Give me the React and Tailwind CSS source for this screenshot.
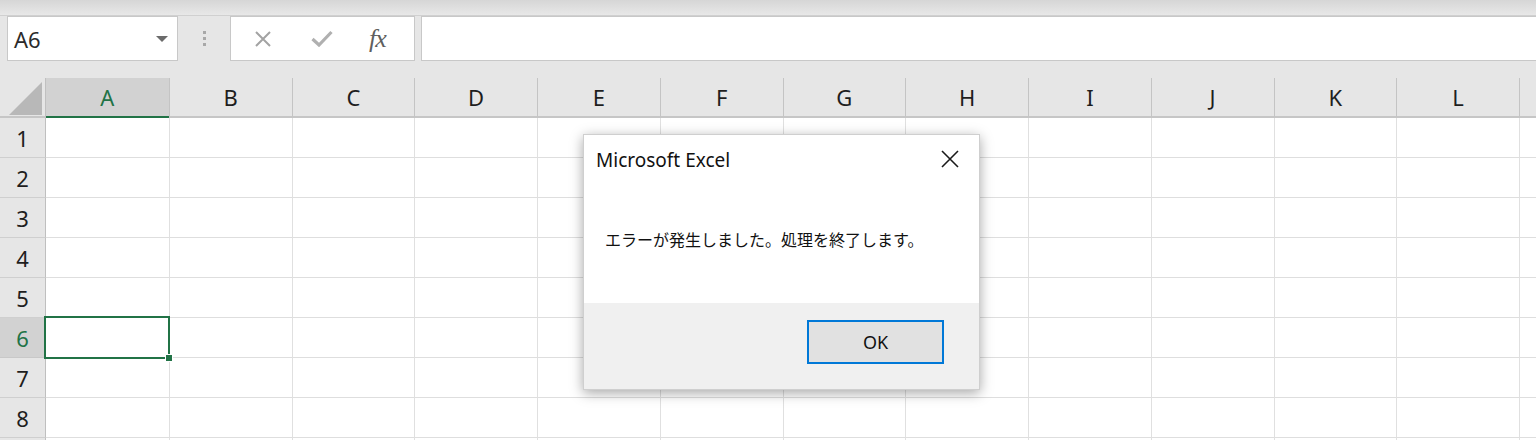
import React from "react";

const COLS = ["A", "B", "C", "D", "E", "F", "G", "H", "I", "J", "K", "L", ""];
const ROWS = [1, 2, 3, 4, 5, 6, 7, 8, 9];

function FormulaBar() {
  return (
    <div className="bg-[#e6e6e6]">
      <div className="h-[16px] bg-gradient-to-b from-[#d6d6d6] to-[#e8e8e8] border-b border-[#d0d0d0]" />
      <div className="flex h-[45px] items-stretch">
        <div className="ml-[7px] w-[171px] bg-white border border-[#c8c8c8] flex items-center justify-between pl-[6px] pr-[9px]">
          <span className="text-[22px] text-[#2b2b2b] leading-none">A6</span>
          <svg width="12" height="6" viewBox="0 0 12 6">
            <polygon points="0,0 12,0 6,6" fill="#6b6b6b" />
          </svg>
        </div>
        <div className="w-[52px] flex items-center justify-center">
          <div className="flex flex-col gap-[3px]">
            <div className="w-[3px] h-[3px] bg-[#a8a8a8]" />
            <div className="w-[3px] h-[3px] bg-[#a8a8a8]" />
            <div className="w-[3px] h-[3px] bg-[#a8a8a8]" />
          </div>
        </div>
        <div className="w-[185px] bg-white border border-[#c8c8c8] flex items-center">
          <div className="w-[62px] flex justify-center pl-[2px]">
            <svg width="18" height="16" viewBox="0 0 18 16">
              <path d="M2 1 L16 15 M16 1 L2 15" stroke="#a3a3a3" strokeWidth="2" fill="none" />
            </svg>
          </div>
          <div className="w-[58px] flex justify-center">
            <svg width="22" height="17" viewBox="0 0 22 17">
              <path d="M1.5 9 L8 15 L20.5 2" stroke="#b0b0b0" strokeWidth="3.2" fill="none" />
            </svg>
          </div>
          <div className="flex-1 flex justify-center pr-[10px]">
            <span className="font-['Liberation_Serif','DejaVu_Serif',serif] italic text-[26px] text-[#5f5f5f] leading-none tracking-[-1px]">fx</span>
          </div>
        </div>
        <div className="ml-[6px] flex-1 bg-white border border-r-0 border-[#c8c8c8]" />
      </div>
      <div className="h-[17px]" />
    </div>
  );
}

function HeaderRow() {
  return (
    <div className="flex h-[40px] bg-[#e6e6e6]">
      <div className="w-[46px] shrink-0 border-b-2 border-[#c6c6c6] border-r border-r-[#c0c0c0] flex items-end justify-end pr-[3px] pb-[1px]">
        <svg width="33" height="33" viewBox="0 0 33 33">
          <polygon points="33,0 33,33 0,33" fill="#b8b8b8" />
        </svg>
      </div>
      {COLS.map((c, i) =>
        c === "A" ? (
          <div
            key={i}
            className="w-[122.75px] shrink-0 bg-[#d2d2d2] border-b-2 border-[#217346] flex items-center justify-center text-[22px] text-[#217346] leading-none"
          >
            {c}
          </div>
        ) : (
          <div
            key={i}
            className="w-[122.75px] shrink-0 border-b-2 border-[#c6c6c6] border-l border-l-[#c4c4c4] flex items-center justify-center text-[22px] text-[#1e1e1e] leading-none"
          >
            {c}
          </div>
        )
      )}
    </div>
  );
}

function BodyRow({ n }) {
  const sel = n === 6;
  const label = n < 9 ? n : "";
  return (
    <div className="flex h-[40px]">
      <div
        className={
          sel
            ? "w-[46px] shrink-0 bg-[#d2d2d2] border-b border-[#c8c8c8] border-r border-r-[#217346] flex items-center justify-center text-[22px] text-[#217346] leading-none"
            : "w-[46px] shrink-0 bg-[#e6e6e6] border-b border-[#cfcfcf] border-r border-r-[#bfbfbf] flex items-center justify-center text-[22px] text-[#1e1e1e] leading-none"
        }
      >
        {label}
      </div>
      {COLS.map((c, i) => (
        <div
          key={i}
          className={
            i === 0
              ? "relative w-[122.75px] shrink-0 bg-white border-b border-[#dedede]"
              : "relative w-[122.75px] shrink-0 bg-white border-b border-[#dedede] border-l border-l-[#e0e0e0]"
          }
        >
          {sel && i === 0 && (
            <>
              <div className="absolute z-10 -left-[2px] -top-[2px] w-[126px] h-[43px] border-2 border-[#217346]" />
              <div className="absolute z-20 left-[119px] top-[36px] w-[8px] h-[8px] bg-[#217346] border border-white" />
            </>
          )}
        </div>
      ))}
    </div>
  );
}

function Dialog() {
  return (
    <div className="absolute z-30 left-[583px] top-[134px] w-[397px] h-[256px] flex flex-col border border-[#cfcfcf] shadow-[0_3px_12px_rgba(0,0,0,0.35)]">
      <div className="h-[168px] bg-white flex flex-col">
        <div className="h-[48px] flex items-center justify-between pl-[12px] pr-[20px]">
          <span className="text-[19px] text-[#111] leading-none pt-[2px]">Microsoft Excel</span>
          <svg width="18" height="18" viewBox="0 0 18 18">
            <path d="M1 1 L17 17 M17 1 L1 17" stroke="#1a1a1a" strokeWidth="1.6" fill="none" />
          </svg>
        </div>
        <div className="flex-1 flex items-center pl-[21px] pb-[8px]">
          <span className="font-['Noto_Sans_CJK_JP','Noto_Sans',sans-serif] text-[16px] text-[#111] leading-none">
            エラーが発生しました。処理を終了します。
          </span>
        </div>
      </div>
      <div className="flex-1 bg-[#f0f0f0] flex justify-end items-start pt-[17px] pr-[35px]">
        <button className="w-[137px] h-[44px] bg-[#e1e1e1] border-2 border-[#0078d7] flex items-center justify-center text-[18px] text-[#111] leading-none">
          OK
        </button>
      </div>
    </div>
  );
}

export default function App() {
  return (
    <div className="relative w-[1536px] h-[440px] overflow-hidden bg-white font-['Noto_Sans','Noto_Sans_CJK_JP',sans-serif]">
      <FormulaBar />
      <HeaderRow />
      {ROWS.map((n) => (
        <BodyRow key={n} n={n} />
      ))}
      <Dialog />
    </div>
  );
}
